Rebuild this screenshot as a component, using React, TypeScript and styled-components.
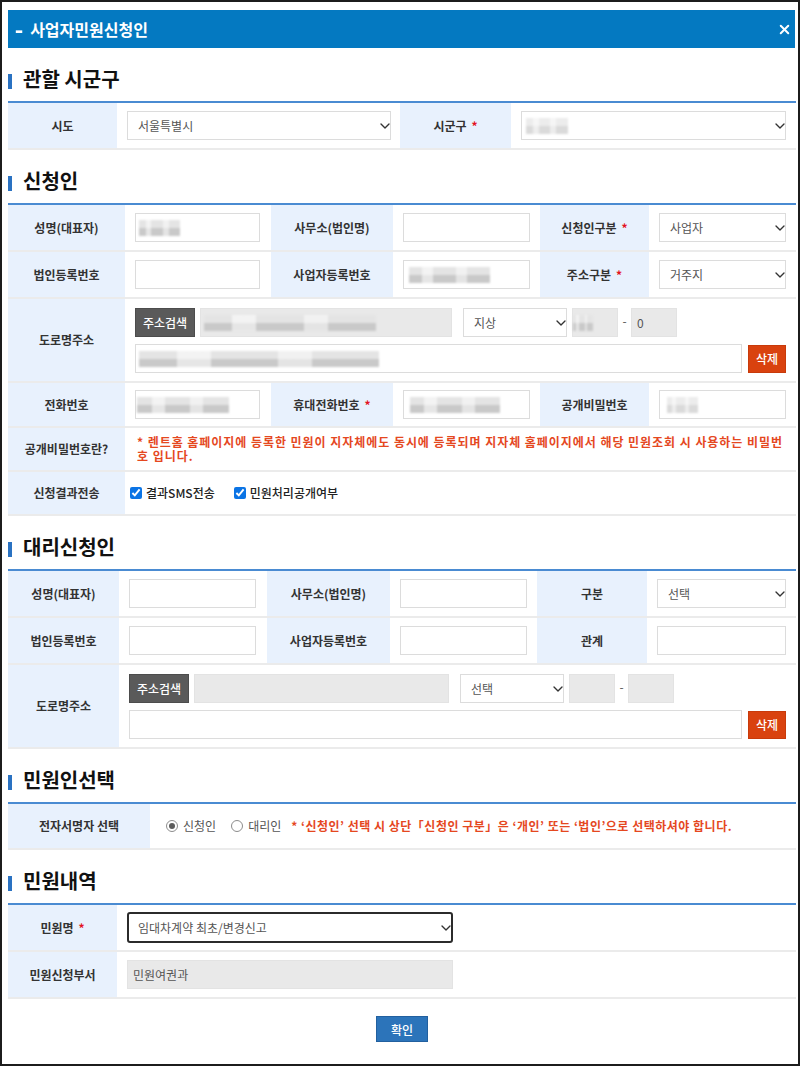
import styled, { createGlobalStyle } from "styled-components";
import { ChevronDown, X } from "lucide-react";

const GlobalStyle = createGlobalStyle`
	html, body { margin: 0; padding: 0; background: #fff; }
	body { font-family: "Noto Sans CJK KR", "Noto Sans", sans-serif; color: #333; }
	* { box-sizing: border-box; }
`;

const Frame = styled.div`
	width: 800px;
	height: 1066px;
	border: 2px solid #1c1c1c;
	padding: 8px 2px 0 6px;
	overflow: hidden;
`;

const TitleBar = styled.header`
	height: 38px;
	margin-right: 1px;
	background: #0479c1;
	display: flex;
	align-items: center;
	justify-content: space-between;
	padding: 0 3px 0 8px;
	color: #fff;
`;

const TitleText = styled.h1`
	margin: 0;
	font-size: 16px;
	font-weight: 700;
	line-height: 20px;
	display: flex;
	align-items: center;
`;

const TitleDash = styled.span`
	display: inline-block;
	margin-right: 8px;
	font-weight: 900;
	transform: scale(1.4, 1.3);
`;

const SectionTitle = styled.h2`
	display: flex;
	align-items: center;
	margin: 19px 0 10px;
	height: 24px;
	font-size: 20px;
	line-height: 24px;
	font-weight: 700;
	color: #111;
	&::before {
		content: "";
		width: 4px;
		height: 15px;
		margin: 4px 11px 0 0;
		background: #2a72c2;
	}
`;

const Table = styled.div`
	border-top: 2px solid #4a8bd2;
`;

const Row = styled.div<{ $cols: string }>`
	display: grid;
	grid-template-columns: ${(p) => p.$cols};
	border-bottom: 2px solid #ebebeb;
`;

const Label = styled.div`
	display: flex;
	align-items: center;
	justify-content: center;
	background: #e8f1fd;
	font-size: 12px;
	font-weight: 700;
	line-height: 16px;
	color: #333;
	text-align: center;
`;

const Req = styled.span`
	color: #e3141e;
	margin-left: 5px;
`;

const Field = styled.div<{ $span?: number; $pad?: string; $column?: boolean }>`
	grid-column: span ${(p) => p.$span ?? 1};
	display: flex;
	flex-direction: ${(p) => (p.$column ? "column" : "row")};
	align-items: ${(p) => (p.$column ? "stretch" : "center")};
	gap: 7px;
	padding: ${(p) => p.$pad ?? "8px 10px"};
	min-width: 0;
`;

const Line = styled.div`
	display: flex;
	align-items: center;
`;

const InputBox = styled.div<{ $w?: number; $gray?: boolean; $gap?: number }>`
	flex: ${(p) => (p.$w ? "none" : "1")};
	width: ${(p) => (p.$w ? `${p.$w}px` : "100%")};
	height: 29px;
	margin-left: ${(p) => p.$gap ?? 0}px;
	display: flex;
	align-items: center;
	padding: 0 5px;
	border: 1px solid ${(p) => (p.$gray ? "#e3e3e3" : "#dcdcdc")};
	background: ${(p) => (p.$gray ? "#e9e9e9" : "#fff")};
	font-size: 12px;
	color: #555;
`;

const SelectBox = styled.div<{ $w?: number; $strong?: boolean; $gap?: number }>`
	flex: none;
	width: ${(p) => (p.$w ? `${p.$w}px` : "100%")};
	height: ${(p) => (p.$strong ? 31 : 29)}px;
	margin-left: ${(p) => p.$gap ?? 0}px;
	display: flex;
	align-items: center;
	justify-content: space-between;
	padding-left: ${(p) => (p.$strong ? 9 : 10)}px;
	border: ${(p) => (p.$strong ? "2px solid #2b2b2b" : "1px solid #dcdcdc")};
	border-radius: ${(p) => (p.$strong ? 3 : 0)}px;
	background: #fff;
	font-size: 12px;
	color: #555;
	svg {
		flex: none;
		margin-right: -3px;
		color: #333;
	}
`;

const Blur = styled.span<{ $w: number; $light?: boolean }>`
	display: inline-block;
	flex: none;
	width: ${(p) => p.$w}px;
	height: 16px;
	background: linear-gradient(
			90deg,
			rgba(255, 255, 255, 0) 0 16%,
			rgba(255, 255, 255, 0.55) 16% 30%,
			rgba(255, 255, 255, 0) 30% 58%,
			rgba(255, 255, 255, 0.5) 58% 72%,
			rgba(255, 255, 255, 0) 72%
		),
		linear-gradient(
			180deg,
			${(p) => (p.$light ? "#ececec" : "#e4e4e4")} 0 50%,
			${(p) => (p.$light ? "#dadada" : "#c9c9c9")} 50% 100%
		);
	filter: blur(0.8px);
`;

const Btn = styled.button<{ $tone: "dark" | "red" | "blue"; $w: number; $h: number }>`
	flex: none;
	width: ${(p) => p.$w}px;
	height: ${(p) => p.$h}px;
	padding: 0;
	border: 1px solid
		${(p) => (p.$tone === "dark" ? "#4c4c4c" : p.$tone === "red" ? "#c83a0a" : "#22609f")};
	background: ${(p) => (p.$tone === "dark" ? "#5a5a5a" : p.$tone === "red" ? "#d9420f" : "#2c74ba")};
	color: #fff;
	font-family: inherit;
	font-size: 12px;
	font-weight: 500;
	margin-left: ${(p) => (p.$tone === "red" ? 6 : 0)}px;
`;

const Dash = styled.span`
	flex: none;
	width: 13px;
	text-align: center;
	font-size: 12px;
	color: #555;
	margin-top: -4px;
`;

const Note = styled.p`
	margin: 0;
	font-size: 12px;
	font-weight: 700;
	line-height: 14px;
	letter-spacing: 0.95px;
	color: #e5481f;
`;

const Check = styled.label<{ $gap?: number }>`
	display: flex;
	align-items: center;
	gap: 4px;
	margin-left: ${(p) => p.$gap ?? 0}px;
	font-size: 12px;
	line-height: 16px;
	font-weight: 500;
	color: #222;
	input {
		width: 12px;
		height: 12px;
		margin: 0;
		accent-color: #0b74e5;
	}
`;

const Radio = styled.label<{ $gap?: number }>`
	display: flex;
	align-items: center;
	gap: 5px;
	margin-left: ${(p) => p.$gap ?? 0}px;
	font-size: 12px;
	line-height: 16px;
	color: #555;
`;

const RadioMark = styled.span<{ $on?: boolean }>`
	display: inline-grid;
	place-items: center;
	width: 12px;
	height: 12px;
	border: 1px solid #8c8c8c;
	border-radius: 50%;
	background: #fff;
	&::after {
		content: "";
		width: 6px;
		height: 6px;
		border-radius: 50%;
		background: ${(p) => (p.$on ? "#5c5c5c" : "transparent")};
	}
`;

const RadioNote = styled.span`
	margin-left: 10px;
	font-size: 12px;
	line-height: 16px;
	font-weight: 700;
	letter-spacing: 0.5px;
	color: #e5481f;
`;

const Footer = styled.div`
	display: flex;
	justify-content: center;
	padding-top: 17px;
`;

const cols1 = "109px 283px 111px 1fr";
const cols2 = "117px 146px 122px 147px 109px 1fr";
const cols3 = "111px 148px 123px 147px 110px 1fr";

const Chevron = () => <ChevronDown size={16} strokeWidth={2} />;

function AddressField({
	span,
	grayW,
	floor,
	filled,
}: {
	span: number;
	grayW: number;
	floor: string;
	filled?: boolean;
}) {
	return (
		<Field $span={span} $column $pad="9px 10px 8px">
			<Line>
				<Btn $tone="dark" $w={60} $h={29}>
					주소검색
				</Btn>
				<InputBox $gray $w={grayW} $gap={5} style={{ paddingLeft: 3 }}>
					{filled && <Blur $w={172} />}
				</InputBox>
				<SelectBox $w={104} $gap={11}>
					{floor}
					<Chevron />
				</SelectBox>
				<InputBox $gray $w={46} $gap={5} style={{ paddingLeft: 0 }}>
					{filled && <Blur $w={20} />}
				</InputBox>
				<Dash>-</Dash>
				<InputBox $gray $w={46}>
					{filled && "0"}
				</InputBox>
			</Line>
			<Line>
				<InputBox style={{ paddingLeft: 3 }}>{filled && <Blur $w={240} />}</InputBox>
				<Btn $tone="red" $w={38} $h={28}>
					삭제
				</Btn>
			</Line>
		</Field>
	);
}

function App() {
	return (
		<Frame>
			<GlobalStyle />
			<TitleBar>
				<TitleText>
					<TitleDash>-</TitleDash>사업자민원신청인
				</TitleText>
				<X size={15} strokeWidth={3.2} />
			</TitleBar>

			<SectionTitle>관할 시군구</SectionTitle>
			<Table>
				<Row $cols={cols1}>
					<Label>시도</Label>
					<Field $pad="8px 9px 8px 10px">
						<SelectBox>
							서울특별시
							<Chevron />
						</SelectBox>
					</Field>
					<Label>
						시군구<Req>*</Req>
					</Label>
					<Field>
						<SelectBox style={{ paddingLeft: 4 }}>
							<Blur $w={42} $light />
							<Chevron />
						</SelectBox>
					</Field>
				</Row>
			</Table>

			<SectionTitle>신청인</SectionTitle>
			<Table>
				<Row $cols={cols2}>
					<Label>성명(대표자)</Label>
					<Field $pad="8px 11px 8px 10px">
						<InputBox style={{ paddingLeft: 3 }}>
							<Blur $w={41} />
						</InputBox>
					</Field>
					<Label>사무소(법인명)</Label>
					<Field>
						<InputBox />
					</Field>
					<Label>
						신청인구분<Req>*</Req>
					</Label>
					<Field>
						<SelectBox>
							사업자
							<Chevron />
						</SelectBox>
					</Field>
				</Row>
				<Row $cols={cols2}>
					<Label>법인등록번호</Label>
					<Field $pad="8px 11px 8px 10px">
						<InputBox />
					</Field>
					<Label>사업자등록번호</Label>
					<Field>
						<InputBox>
							<Blur $w={81} />
						</InputBox>
					</Field>
					<Label>
						주소구분<Req>*</Req>
					</Label>
					<Field>
						<SelectBox>
							거주지
							<Chevron />
						</SelectBox>
					</Field>
				</Row>
				<Row $cols={cols2}>
					<Label>도로명주소</Label>
					<AddressField span={5} grayW={252} floor="지상" filled />
				</Row>
				<Row $cols={cols2}>
					<Label>전화번호</Label>
					<Field $pad="7px 11px 7px 10px">
						<InputBox style={{ paddingLeft: 1 }}>
							<Blur $w={92} />
						</InputBox>
					</Field>
					<Label>
						휴대전화번호<Req>*</Req>
					</Label>
					<Field $pad="7px 10px">
						<InputBox style={{ paddingLeft: 6 }}>
							<Blur $w={90} />
						</InputBox>
					</Field>
					<Label>공개비밀번호</Label>
					<Field $pad="7px 10px">
						<InputBox style={{ paddingLeft: 7 }}>
							<Blur $w={31} $light />
						</InputBox>
					</Field>
				</Row>
				<Row $cols={cols2}>
					<Label>공개비밀번호란?</Label>
					<Field $span={5} $pad="7px 10px 7px 12px">
						<Note>
							* 렌트홈 홈페이지에 등록한 민원이 지자체에도 동시에 등록되며 지자체 홈페이지에서
							해당 민원조회 시 사용하는 비밀번호 입니다.
						</Note>
					</Field>
				</Row>
				<Row $cols={cols2}>
					<Label>신청결과전송</Label>
					<Field $span={5} $pad="13px 5px">
						<Check>
							<input type="checkbox" defaultChecked />
							결과SMS전송
						</Check>
						<Check $gap={12}>
							<input type="checkbox" defaultChecked />
							민원처리공개여부
						</Check>
					</Field>
				</Row>
			</Table>

			<SectionTitle>대리신청인</SectionTitle>
			<Table>
				<Row $cols={cols3}>
					<Label>성명(대표자)</Label>
					<Field $pad="8px 11px 8px 10px">
						<InputBox />
					</Field>
					<Label>사무소(법인명)</Label>
					<Field>
						<InputBox />
					</Field>
					<Label>구분</Label>
					<Field>
						<SelectBox>
							선택
							<Chevron />
						</SelectBox>
					</Field>
				</Row>
				<Row $cols={cols3}>
					<Label>법인등록번호</Label>
					<Field $pad="8px 11px 8px 10px">
						<InputBox />
					</Field>
					<Label>사업자등록번호</Label>
					<Field>
						<InputBox />
					</Field>
					<Label>관계</Label>
					<Field>
						<InputBox />
					</Field>
				</Row>
				<Row $cols={cols3}>
					<Label>도로명주소</Label>
					<AddressField span={5} grayW={255} floor="선택" />
				</Row>
			</Table>

			<SectionTitle>민원인선택</SectionTitle>
			<Table>
				<Row $cols="142px 1fr">
					<Label>전자서명자 선택</Label>
					<Field $pad="14px 10px 14px 16px" style={{ gap: 0 }}>
						<Radio>
							<RadioMark $on />
							신청인
						</Radio>
						<Radio $gap={15}>
							<RadioMark />
							대리인
						</Radio>
						<RadioNote>
							* ‘신청인’ 선택 시 상단「신청인 구분」은 ‘개인’ 또는 ‘법인’으로 선택하셔야 합니다.
						</RadioNote>
					</Field>
				</Row>
			</Table>

			<SectionTitle>민원내역</SectionTitle>
			<Table>
				<Row $cols="109px 1fr">
					<Label>
						민원명<Req>*</Req>
					</Label>
					<Field $pad="7px 10px">
						<SelectBox $strong $w={326}>
							임대차계약 최초/변경신고
							<Chevron />
						</SelectBox>
					</Field>
				</Row>
				<Row $cols="109px 1fr">
					<Label>민원신청부서</Label>
					<Field>
						<InputBox $gray $w={326}>
							민원여권과
						</InputBox>
					</Field>
				</Row>
			</Table>

			<Footer>
				<Btn $tone="blue" $w={52} $h={26}>
					확인
				</Btn>
			</Footer>
		</Frame>
	);
}

export default App;
